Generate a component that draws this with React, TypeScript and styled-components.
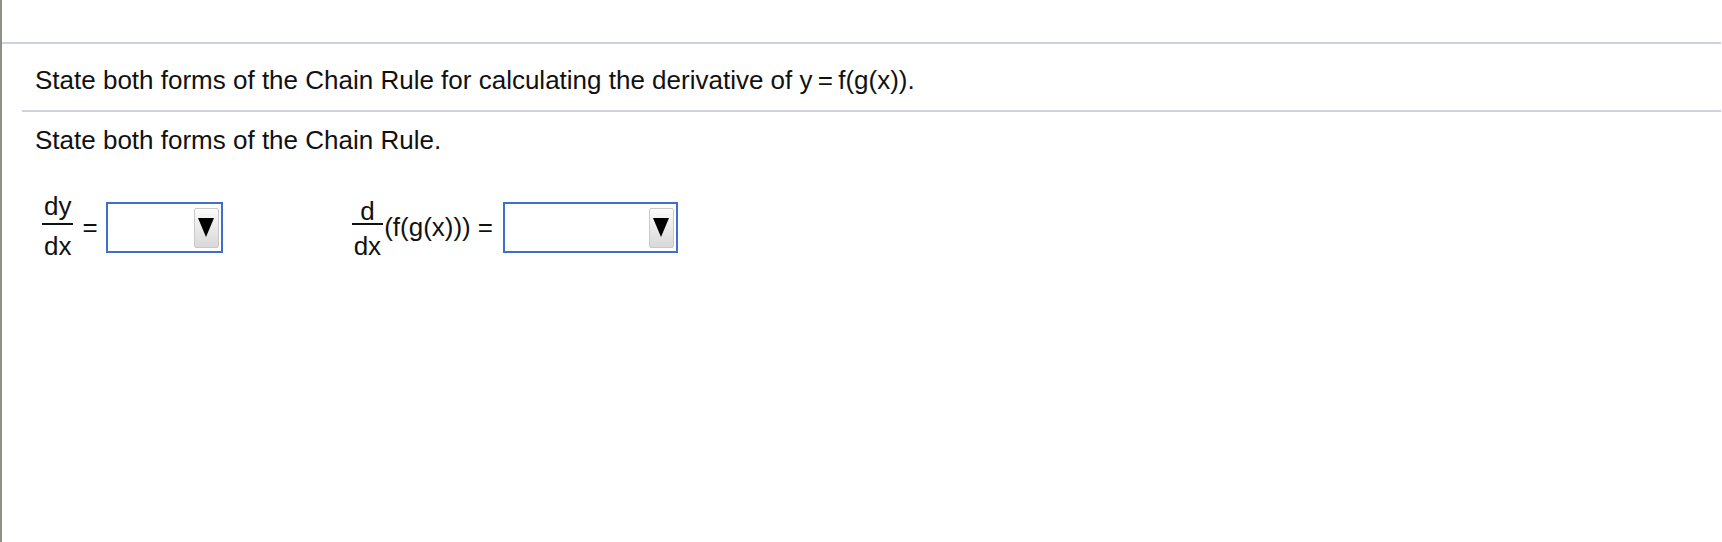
import React from "react";
import styled, { createGlobalStyle } from "styled-components";

const GlobalStyle = createGlobalStyle`
  html, body {
    margin: 0;
    padding: 0;
    background: #ffffff;
  }
  body {
    font-family: "Liberation Sans", Arial, Helvetica, sans-serif;
    color: #111111;
  }
`;

function Fraction({ top, bottom, drop = 0 }: { top: string; bottom: string; drop?: number }) {
  return (
    <Frac>
      <Num $drop={drop}>{top}</Num>
      <Bar />
      <Den>{bottom}</Den>
    </Frac>
  );
}

function AnswerSelect({ width }: { width: number }) {
  return (
    <SelectBox $width={width}>
      <ArrowButton>
        <Arrow />
      </ArrowButton>
    </SelectBox>
  );
}

export default function App() {
  return (
    <>
      <GlobalStyle />
      <Page>
        <TopBar />
        <Question>
          <Prompt>
            State both forms of the Chain Rule for calculating the derivative of y{"\u2009"}={"\u2009"}f(g(x)).
          </Prompt>
          <Body>
            <Instruction>State both forms of the Chain Rule.</Instruction>
            <AnswerRow>
              <Expression>
                <Fraction top="dy" bottom="dx" />
                <Equals $left={9} $right={8}>=</Equals>
                <AnswerSelect width={117} />
              </Expression>
              <Expression>
                <Fraction top="d" bottom="dx" drop={5} />
                <Inner>(f(g(x)))</Inner>
                <Equals $left={7} $right={10}>=</Equals>
                <AnswerSelect width={175} />
              </Expression>
            </AnswerRow>
          </Body>
        </Question>
      </Page>
    </>
  );
}

const Page = styled.div`
  min-height: 542px;
  border-left: 2px solid #8e8f86;
  box-sizing: border-box;
  display: flex;
  flex-direction: column;
`;

const TopBar = styled.div`
  height: 42px;
  border-bottom: 2px solid #cdd0dd;
  margin-right: 1px;
`;

const Question = styled.div`
  margin-left: 20px;
  margin-right: 1px;
`;

const Prompt = styled.div`
  padding: 22px 0 16px 13px;
  font-size: 26px;
  line-height: 28px;
  border-bottom: 2px solid #cdd0dd;
`;

const Body = styled.div`
  padding: 14px 0 0 13px;
`;

const Instruction = styled.div`
  font-size: 26px;
  line-height: 28px;
`;

const AnswerRow = styled.div`
  display: flex;
  align-items: center;
  gap: 129px;
  margin-top: 39px;
  padding-left: 7px;
`;

const Expression = styled.div`
  display: flex;
  align-items: center;
`;

const Frac = styled.div`
  display: inline-flex;
  flex-direction: column;
  align-items: center;
  font-size: 26px;
  line-height: 26px;
  margin-bottom: 3px;
`;

const Num = styled.span<{ $drop: number }>`
  padding: ${(p) => p.$drop}px 2px 4px;
  margin-bottom: ${(p) => -p.$drop}px;
`;

const Den = styled.span`
  padding: 8px 2px 0;
`;

const Bar = styled.div`
  align-self: stretch;
  height: 2px;
  background: #111111;
`;

const Inner = styled.span`
  font-size: 26px;
  margin-left: 1px;
`;

const Equals = styled.span<{ $left: number; $right: number }>`
  font-size: 26px;
  margin: 0 ${(p) => p.$right}px 0 ${(p) => p.$left}px;
`;

const SelectBox = styled.div<{ $width: number }>`
  width: ${(p) => p.$width}px;
  height: 51px;
  box-sizing: border-box;
  border: 2px solid #3f6fcc;
  background: #ffffff;
  display: flex;
  align-items: center;
  justify-content: flex-end;
  padding-right: 2px;
`;

const ArrowButton = styled.div`
  width: 25px;
  height: 40px;
  box-sizing: border-box;
  border: 1px solid #c9c9c9;
  border-radius: 2px;
  background: linear-gradient(#fbfbfb, #e6e6e6 60%, #d9d9d9);
  display: flex;
  align-items: center;
  justify-content: center;
`;

const Arrow = styled.div`
  width: 0;
  height: 0;
  border-left: 8px solid transparent;
  border-right: 8px solid transparent;
  border-top: 19px solid #000000;
`;
